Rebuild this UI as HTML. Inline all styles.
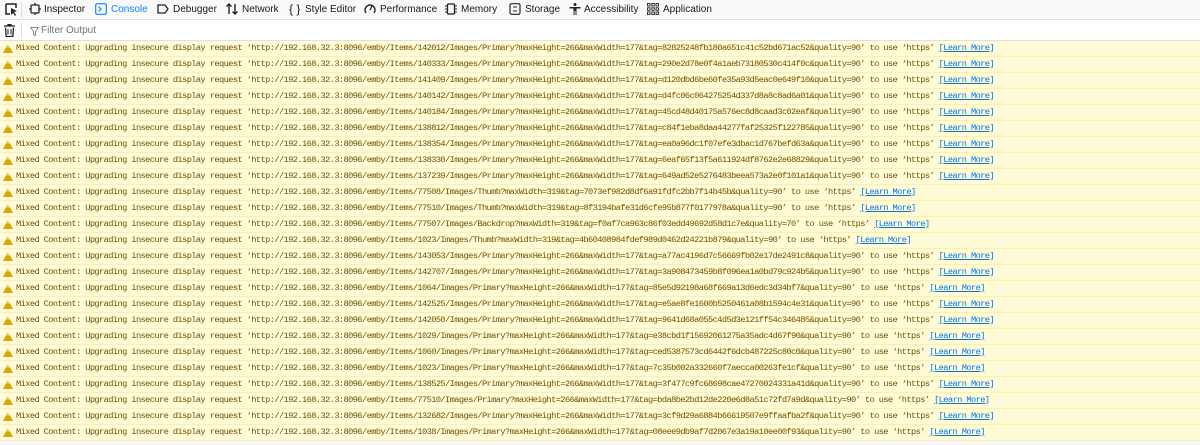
<!DOCTYPE html>
<html><head><meta charset="utf-8"><style>
*{margin:0;padding:0;box-sizing:border-box}
body{width:1200px;height:445px;overflow:hidden;background:#f5f6fa;font-family:"Liberation Sans",sans-serif}
#tb{position:absolute;left:0;top:0;width:1200px;height:20px;background:#f9f9fa;border-bottom:1px solid #e0e0e2}
#tb span{position:absolute;top:4px;font-size:10px;color:#18181a;white-space:nowrap}
#tb svg{position:absolute;top:3px}
#fb{position:absolute;left:0;top:20px;width:1200px;height:21px;background:#fff;border-bottom:1px solid #e0e0e2}
#rows{position:absolute;left:0;top:41px;width:1200px}
.r{height:16px;background:#fffbd6;border-bottom:1px solid #fff0a8;font-family:"Liberation Mono",monospace;font-size:8.7px;letter-spacing:-0.6px;line-height:15px;color:#715100;white-space:nowrap;padding-left:16px;position:relative;overflow:hidden}
.r:before{content:"";position:absolute;left:3px;top:3px;border-left:5px solid transparent;border-right:5px solid transparent;border-bottom:9px solid #d7a600}
.r:after{content:"!";position:absolute;left:7px;top:2px;font:bold 7px "Liberation Sans",sans-serif;color:#fffbd6;letter-spacing:0}
.r a{color:#0074e8;text-decoration:underline}
</style></head><body>
<div id="tb">
<svg style="left:5px" width="13" height="13" viewBox="0 0 13 13"><path d="M1 1h10v4M1 1v10h4" stroke="#222" stroke-width="1.5" fill="none"/><path d="M6 5l6 3-3 1 2 3-1 1-2-3-2 2z" fill="#222"/></svg>
<div style="position:absolute;left:21px;top:2px;width:1px;height:15px;background:#ddd"></div>
<svg style="left:29px" width="12" height="12" viewBox="0 0 12 12"><rect x="2" y="2" width="8" height="8" rx="1" stroke="#222" stroke-width="1.3" fill="none"/><path d="M6 0v2M6 10v2M0 6h2M10 6h2" stroke="#222" stroke-width="1.3"/></svg>
<span style="left:44px">Inspector</span>
<svg style="left:95px" width="12" height="12" viewBox="0 0 12 12"><rect x="0.7" y="0.7" width="10.6" height="10.6" rx="1.5" stroke="#0a84ff" stroke-width="1.2" fill="none"/><path d="M3.5 3.5l2.5 2.5-2.5 2.5" stroke="#0a84ff" stroke-width="1.2" fill="none"/></svg>
<span style="left:111px;color:#0a84ff">Console</span>
<svg style="left:157px" width="12" height="12" viewBox="0 0 12 12"><path d="M1 2h7l3 4-3 4H1z" stroke="#222" stroke-width="1.3" fill="none"/></svg>
<span style="left:173px">Debugger</span>
<svg style="left:226px" width="12" height="12" viewBox="0 0 12 12"><path d="M3 11V1M0.5 3.5L3 1l2.5 2.5M9 1v10M6.5 8.5L9 11l2.5-2.5" stroke="#222" stroke-width="1.4" fill="none"/></svg>
<span style="left:242px">Network</span>
<span style="left:289px;top:2px;font-size:12px">{ }</span>
<span style="left:305px">Style Editor</span>
<svg style="left:364px" width="12" height="12" viewBox="0 0 12 12"><path d="M2 10A5 5 0 1 1 10 10" stroke="#222" stroke-width="1.4" fill="none"/><path d="M6 7l2-4" stroke="#222" stroke-width="1.3"/></svg>
<span style="left:380px">Performance</span>
<svg style="left:445px" width="12" height="12" viewBox="0 0 12 12"><rect x="2.5" y="1" width="7" height="10" rx="1" stroke="#222" stroke-width="1.3" fill="none"/><path d="M0 3h2M0 6h2M0 9h2M10 3h2M10 6h2M10 9h2" stroke="#222"/></svg>
<span style="left:461px">Memory</span>
<svg style="left:509px" width="12" height="12" viewBox="0 0 12 12"><rect x="1" y="0.7" width="10" height="10.6" rx="1.5" stroke="#222" stroke-width="1.2" fill="none"/><path d="M4 4h4M4 8h4" stroke="#222"/></svg>
<span style="left:525px">Storage</span>
<svg style="left:569px" width="12" height="12" viewBox="0 0 12 12"><circle cx="6" cy="1.5" r="1.5" fill="#222"/><path d="M0.5 4h11v1.5H7.5V12H6.5V8h-1v4H4.5V5.5H0.5z" fill="#222"/></svg>
<span style="left:584px">Accessibility</span>
<svg style="left:647px" width="12" height="12" viewBox="0 0 12 12" fill="none" stroke="#222" stroke-width="0.9"><rect x="0.5" y="0.5" width="2.5" height="2.5"/><rect x="4.8" y="0.5" width="2.5" height="2.5"/><rect x="9" y="0.5" width="2.5" height="2.5"/><rect x="0.5" y="4.8" width="2.5" height="2.5"/><rect x="4.8" y="4.8" width="2.5" height="2.5"/><rect x="9" y="4.8" width="2.5" height="2.5"/><rect x="0.5" y="9" width="2.5" height="2.5"/><rect x="4.8" y="9" width="2.5" height="2.5"/><rect x="9" y="9" width="2.5" height="2.5"/></svg>
<span style="left:663px">Application</span>
</div>
<div id="fb">
<svg style="position:absolute;left:4px;top:4px" width="11" height="13" viewBox="0 0 11 13"><path d="M0 2h11M4 2V0.7h3V2M1.5 3.5l.7 9h6.6l.7-9" stroke="#222" stroke-width="1.3" fill="none"/><path d="M4 5v5.5M7 5v5.5" stroke="#222"/></svg>
<div style="position:absolute;left:21px;top:3px;width:1px;height:15px;background:#ddd"></div>
<svg style="position:absolute;left:30px;top:7px" width="9" height="9" viewBox="0 0 9 9"><path d="M0.5 0.5h8L5.5 4.5v4l-2-1v-3z" stroke="#888" fill="none"/></svg>
<span style="position:absolute;left:41px;top:5px;font-size:10px;color:#737373">Filter Output</span>
</div>
<div id="rows">
<div class="r">Mixed Content: Upgrading insecure display request ‘http://192.168.32.3:8096/emby/Items/142012/Images/Primary?maxHeight=266&amp;maxWidth=177&amp;tag=82825248fb180a651c41c52bd671ac52&amp;quality=90’ to use ‘https’ <a>[Learn More]</a></div>
<div class="r">Mixed Content: Upgrading insecure display request ‘http://192.168.32.3:8096/emby/Items/140333/Images/Primary?maxHeight=266&amp;maxWidth=177&amp;tag=290e2d78e0f4a1aeb73180530c414f0c&amp;quality=90’ to use ‘https’ <a>[Learn More]</a></div>
<div class="r">Mixed Content: Upgrading insecure display request ‘http://192.168.32.3:8096/emby/Items/141409/Images/Primary?maxHeight=266&amp;maxWidth=177&amp;tag=d120dbd6be60fe35a93d5eac0e649f10&amp;quality=90’ to use ‘https’ <a>[Learn More]</a></div>
<div class="r">Mixed Content: Upgrading insecure display request ‘http://192.168.32.3:8096/emby/Items/140142/Images/Primary?maxHeight=266&amp;maxWidth=177&amp;tag=d4fc06c064275254d337d8a8c8ad6a01&amp;quality=90’ to use ‘https’ <a>[Learn More]</a></div>
<div class="r">Mixed Content: Upgrading insecure display request ‘http://192.168.32.3:8096/emby/Items/140184/Images/Primary?maxHeight=266&amp;maxWidth=177&amp;tag=45cd48d40175a576ec8d8caad3c02eaf&amp;quality=90’ to use ‘https’ <a>[Learn More]</a></div>
<div class="r">Mixed Content: Upgrading insecure display request ‘http://192.168.32.3:8096/emby/Items/138812/Images/Primary?maxHeight=266&amp;maxWidth=177&amp;tag=c84f1eba8daa44277faf25325f122785&amp;quality=90’ to use ‘https’ <a>[Learn More]</a></div>
<div class="r">Mixed Content: Upgrading insecure display request ‘http://192.168.32.3:8096/emby/Items/138354/Images/Primary?maxHeight=266&amp;maxWidth=177&amp;tag=ea0a96dc1f07efe3dbac1d767befd63a&amp;quality=90’ to use ‘https’ <a>[Learn More]</a></div>
<div class="r">Mixed Content: Upgrading insecure display request ‘http://192.168.32.3:8096/emby/Items/138330/Images/Primary?maxHeight=266&amp;maxWidth=177&amp;tag=6eaf65f13f5a611924df8762e2e68829&amp;quality=90’ to use ‘https’ <a>[Learn More]</a></div>
<div class="r">Mixed Content: Upgrading insecure display request ‘http://192.168.32.3:8096/emby/Items/137239/Images/Primary?maxHeight=266&amp;maxWidth=177&amp;tag=649ad52e5276483beea573a2e0f101a1&amp;quality=90’ to use ‘https’ <a>[Learn More]</a></div>
<div class="r">Mixed Content: Upgrading insecure display request ‘http://192.168.32.3:8096/emby/Items/77508/Images/Thumb?maxWidth=319&amp;tag=7073ef982d8df6a91fdfc2bb7f14b45b&amp;quality=90’ to use ‘https’ <a>[Learn More]</a></div>
<div class="r">Mixed Content: Upgrading insecure display request ‘http://192.168.32.3:8096/emby/Items/77510/Images/Thumb?maxWidth=319&amp;tag=8f3194bafe31d6cfe95b877f0177978a&amp;quality=90’ to use ‘https’ <a>[Learn More]</a></div>
<div class="r">Mixed Content: Upgrading insecure display request ‘http://192.168.32.3:8096/emby/Items/77507/Images/Backdrop?maxWidth=319&amp;tag=f0af7ca963c86f03edd49692d58d1c7e&amp;quality=70’ to use ‘https’ <a>[Learn More]</a></div>
<div class="r">Mixed Content: Upgrading insecure display request ‘http://192.168.32.3:8096/emby/Items/1023/Images/Thumb?maxWidth=319&amp;tag=4b60408984fdef989d0462d24221b879&amp;quality=90’ to use ‘https’ <a>[Learn More]</a></div>
<div class="r">Mixed Content: Upgrading insecure display request ‘http://192.168.32.3:8096/emby/Items/143053/Images/Primary?maxHeight=266&amp;maxWidth=177&amp;tag=a77ac4196d7c56669fb02e17de2491c8&amp;quality=90’ to use ‘https’ <a>[Learn More]</a></div>
<div class="r">Mixed Content: Upgrading insecure display request ‘http://192.168.32.3:8096/emby/Items/142707/Images/Primary?maxHeight=266&amp;maxWidth=177&amp;tag=3a908473459b8f096ea1a0bd79c924b5&amp;quality=90’ to use ‘https’ <a>[Learn More]</a></div>
<div class="r">Mixed Content: Upgrading insecure display request ‘http://192.168.32.3:8096/emby/Items/1064/Images/Primary?maxHeight=266&amp;maxWidth=177&amp;tag=85e5d92198a68f669a13d6edc3d34bf7&amp;quality=90’ to use ‘https’ <a>[Learn More]</a></div>
<div class="r">Mixed Content: Upgrading insecure display request ‘http://192.168.32.3:8096/emby/Items/142525/Images/Primary?maxHeight=266&amp;maxWidth=177&amp;tag=e5ae8fe1600b5250461a08b1594c4e31&amp;quality=90’ to use ‘https’ <a>[Learn More]</a></div>
<div class="r">Mixed Content: Upgrading insecure display request ‘http://192.168.32.3:8096/emby/Items/142050/Images/Primary?maxHeight=266&amp;maxWidth=177&amp;tag=9641d68a055c4d5d3e121ff54c346485&amp;quality=90’ to use ‘https’ <a>[Learn More]</a></div>
<div class="r">Mixed Content: Upgrading insecure display request ‘http://192.168.32.3:8096/emby/Items/1029/Images/Primary?maxHeight=266&amp;maxWidth=177&amp;tag=e38cbd1f15692061275a35adc4d67f90&amp;quality=90’ to use ‘https’ <a>[Learn More]</a></div>
<div class="r">Mixed Content: Upgrading insecure display request ‘http://192.168.32.3:8096/emby/Items/1060/Images/Primary?maxHeight=266&amp;maxWidth=177&amp;tag=ced5387573cd6442f6dcb487225c80c0&amp;quality=90’ to use ‘https’ <a>[Learn More]</a></div>
<div class="r">Mixed Content: Upgrading insecure display request ‘http://192.168.32.3:8096/emby/Items/1023/Images/Primary?maxHeight=266&amp;maxWidth=177&amp;tag=7c35b002a332660f7aecca00263fe1cf&amp;quality=90’ to use ‘https’ <a>[Learn More]</a></div>
<div class="r">Mixed Content: Upgrading insecure display request ‘http://192.168.32.3:8096/emby/Items/138525/Images/Primary?maxHeight=266&amp;maxWidth=177&amp;tag=3f477c9fc68698cae47270024331a41d&amp;quality=90’ to use ‘https’ <a>[Learn More]</a></div>
<div class="r">Mixed Content: Upgrading insecure display request ‘http://192.168.32.3:8096/emby/Items/77510/Images/Primary?maxHeight=266&amp;maxWidth=177&amp;tag=bda8be2bd12de220e6d8a51c72fd7a9d&amp;quality=90’ to use ‘https’ <a>[Learn More]</a></div>
<div class="r">Mixed Content: Upgrading insecure display request ‘http://192.168.32.3:8096/emby/Items/132682/Images/Primary?maxHeight=266&amp;maxWidth=177&amp;tag=3cf9d29a6884b66619507e9ffaafba2f&amp;quality=90’ to use ‘https’ <a>[Learn More]</a></div>
<div class="r">Mixed Content: Upgrading insecure display request ‘http://192.168.32.3:8096/emby/Items/1038/Images/Primary?maxHeight=266&amp;maxWidth=177&amp;tag=08eee9db9af7d2067e3a19a10ee00f93&amp;quality=90’ to use ‘https’ <a>[Learn More]</a></div>
</div>
</body></html>
